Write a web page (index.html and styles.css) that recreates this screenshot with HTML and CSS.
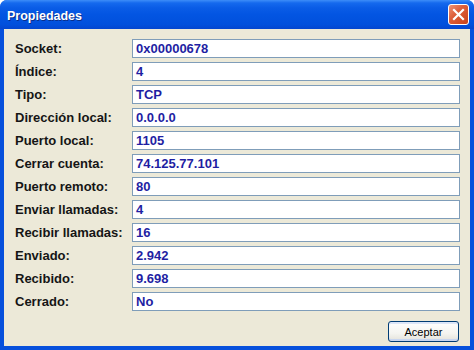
FILE: index.html
```html
<!DOCTYPE html>
<html>
<head>
<meta charset="utf-8">
<link rel="stylesheet" href="styles.css">
</head>
<body>
<div class="window">
  <div class="titlebar">
    <span class="title">Propiedades</span>
    <button class="close" aria-label="Cerrar">
      <svg width="13" height="13" viewBox="0 0 13 13"><path d="M2 2 L11 11 M11 2 L2 11" stroke="#fff" stroke-width="2.2" stroke-linecap="square"/></svg>
    </button>
  </div>
  <div class="content">
    <div class="grid">
      <div class="label">Socket:</div><div class="field">0x00000678</div>
      <div class="label">Índice:</div><div class="field">4</div>
      <div class="label">Tipo:</div><div class="field">TCP</div>
      <div class="label">Dirección local:</div><div class="field">0.0.0.0</div>
      <div class="label">Puerto local:</div><div class="field">1105</div>
      <div class="label">Cerrar cuenta:</div><div class="field">74.125.77.101</div>
      <div class="label">Puerto remoto:</div><div class="field">80</div>
      <div class="label">Enviar llamadas:</div><div class="field">4</div>
      <div class="label">Recibir llamadas:</div><div class="field">16</div>
      <div class="label">Enviado:</div><div class="field">2.942</div>
      <div class="label">Recibido:</div><div class="field">9.698</div>
      <div class="label">Cerrado:</div><div class="field">No</div>
    </div>
    <div class="actions">
      <button class="btn">Aceptar</button>
    </div>
  </div>
</div>
</body>
</html>
```
FILE: styles.css
```css
html, body {
  margin: 0;
  padding: 0;
  background: #fff;
}
.window {
  width: 474px;
  height: 350px;
  box-sizing: border-box;
  background: #0650DC;
  border-radius: 7px 7px 0 0;
  display: flex;
  flex-direction: column;
  padding: 0 4px 4px 4px;
  font-family: "Liberation Sans", sans-serif;
}
.titlebar {
  height: 29px;
  margin: 0 -4px;
  padding: 0 5px 0 7px;
  display: flex;
  align-items: center;
  justify-content: space-between;
  border-radius: 7px 7px 0 0;
  background: linear-gradient(#3D8DF8 0, #1569EE 3px, #0A5CE6 8px, #0355E2 50%, #0150DC 85%, #0446CF 100%);
}
.title {
  color: #fff;
  font-family: "Liberation Sans", sans-serif;
  font-weight: bold;
  font-size: 12.5px;
  text-shadow: 1px 1px 0 #0A2E8A;
  margin-top: 2px;
}
.close {
  width: 21px;
  height: 21px;
  padding: 0;
  border: 1px solid #fff;
  border-radius: 3px;
  background: linear-gradient(135deg, #EE9476 0%, #DD5F3B 40%, #C8421A 100%);
  display: flex;
  align-items: center;
  justify-content: center;
}
.content {
  flex: 1;
  background: #ECE9D8;
  padding: 10px 10px 0 11px;
  display: flex;
  flex-direction: column;
}
.grid {
  display: grid;
  grid-template-columns: 117px 1fr;
  row-gap: 4px;
}
.label {
  font-family: "Liberation Sans", sans-serif;
  font-weight: bold;
  font-size: 13px;
  color: #151515;
  line-height: 19px;
}
.field {
  height: 19px;
  box-sizing: border-box;
  border: 1px solid #7F9DB9;
  background: #fff;
  padding: 0 3px;
  font-family: "Liberation Sans", sans-serif;
  font-weight: bold;
  font-size: 13px;
  line-height: 17px;
  color: #1F1FA3;
}
.actions {
  display: flex;
  justify-content: flex-end;
  margin-top: 10px;
}
.btn {
  width: 71px;
  height: 21px;
  margin-right: 1px;
  border: 1px solid #003C74;
  border-radius: 3px;
  background: linear-gradient(#FFFFFF 0%, #F4F4F0 60%, #E3E2DA 100%);
  box-shadow: inset 0 -2px 0 #C7D5F0, inset 0 2px 0 #DCE6F8;
  font-family: "Liberation Sans", sans-serif;
  font-size: 11px;
  color: #000;
  padding: 0;
}
```
